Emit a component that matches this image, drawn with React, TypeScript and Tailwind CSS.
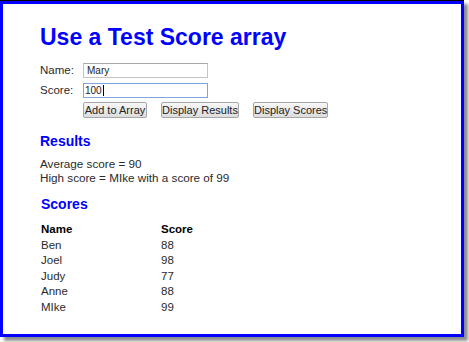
const scores = [
  { name: 'Ben', score: 88 },
  { name: 'Joel', score: 98 },
  { name: 'Judy', score: 77 },
  { name: 'Anne', score: 88 },
  { name: 'MIke', score: 99 },
]

function Button({ label, width }: { label: string; width: string }) {
  return (
    <button
      className={`${width} h-[16px] whitespace-nowrap rounded-[2px] border border-[#a7a7a7] bg-gradient-to-b from-[#f7f7f7] to-[#dddddd] px-0 text-[11px] leading-none text-[#222]`}
    >
      {label}
    </button>
  )
}

export default function App() {
  return (
    <div className="h-[342px] w-[469px] bg-white font-['Liberation_Sans',Arial,sans-serif] text-[#2a2a2a]">
      <div className="h-[337px] w-[464px] border-t border-black shadow-[4px_4px_3px_rgba(0,0,0,0.45)]">
        <div className="h-[336px] border-[3px] border-[#0000ff] bg-white pl-[37px] pt-[20px]">
          <h1 className="text-[23px] font-bold leading-[26px] text-[#0000ff]">Use a Test Score array</h1>

          <div className="mt-[13px] grid grid-cols-[43px_125px] gap-y-[5px] text-[11.5px]">
            <label className="leading-[15px]">Name:</label>
            <div className="flex h-[15px] items-center border border-[#c4c4c4] border-t-[#a9a9a9] px-[3px] text-[10px] text-[#222]">Mary</div>
            <label className="leading-[15px]">Score:</label>
            <div className="flex h-[15px] items-center border border-[#7ea6dc] px-[1px] text-[10px] text-[#222]">
              100<span className="ml-px h-[11px] w-px bg-black" />
            </div>
          </div>
          <div className="ml-[43px] mt-[4px] flex gap-[14px]">
            <Button label="Add to Array" width="w-[64px]" />
            <Button label="Display Results" width="w-[78px]" />
            <Button label="Display Scores" width="w-[75px]" />
          </div>

          <h2 className="mt-[15px] text-[14px] font-bold leading-[16px] text-[#0000ff]">Results</h2>
          <div className="mt-[8px] text-[11.7px] leading-[14px]">
            <p>Average score = 90</p>
            <p>High score = MIke with a score of 99</p>
          </div>

          <h2 className="ml-px mt-[11px] text-[14px] font-bold leading-[16px] text-[#0000ff]">Scores</h2>
          <table className="ml-px mt-[10px] text-[11.5px]">
            <thead>
              <tr className="h-[15.5px] leading-[15px]">
                <th className="w-[120px] p-0 text-left font-bold text-black">Name</th>
                <th className="p-0 text-left font-bold text-black">Score</th>
              </tr>
            </thead>
            <tbody>
              {scores.map((s) => (
                <tr key={s.name} className="h-[15.5px] leading-[15px]">
                  <td className="p-0">{s.name}</td>
                  <td className="p-0">{s.score}</td>
                </tr>
              ))}
            </tbody>
          </table>
        </div>
      </div>
    </div>
  )
}
